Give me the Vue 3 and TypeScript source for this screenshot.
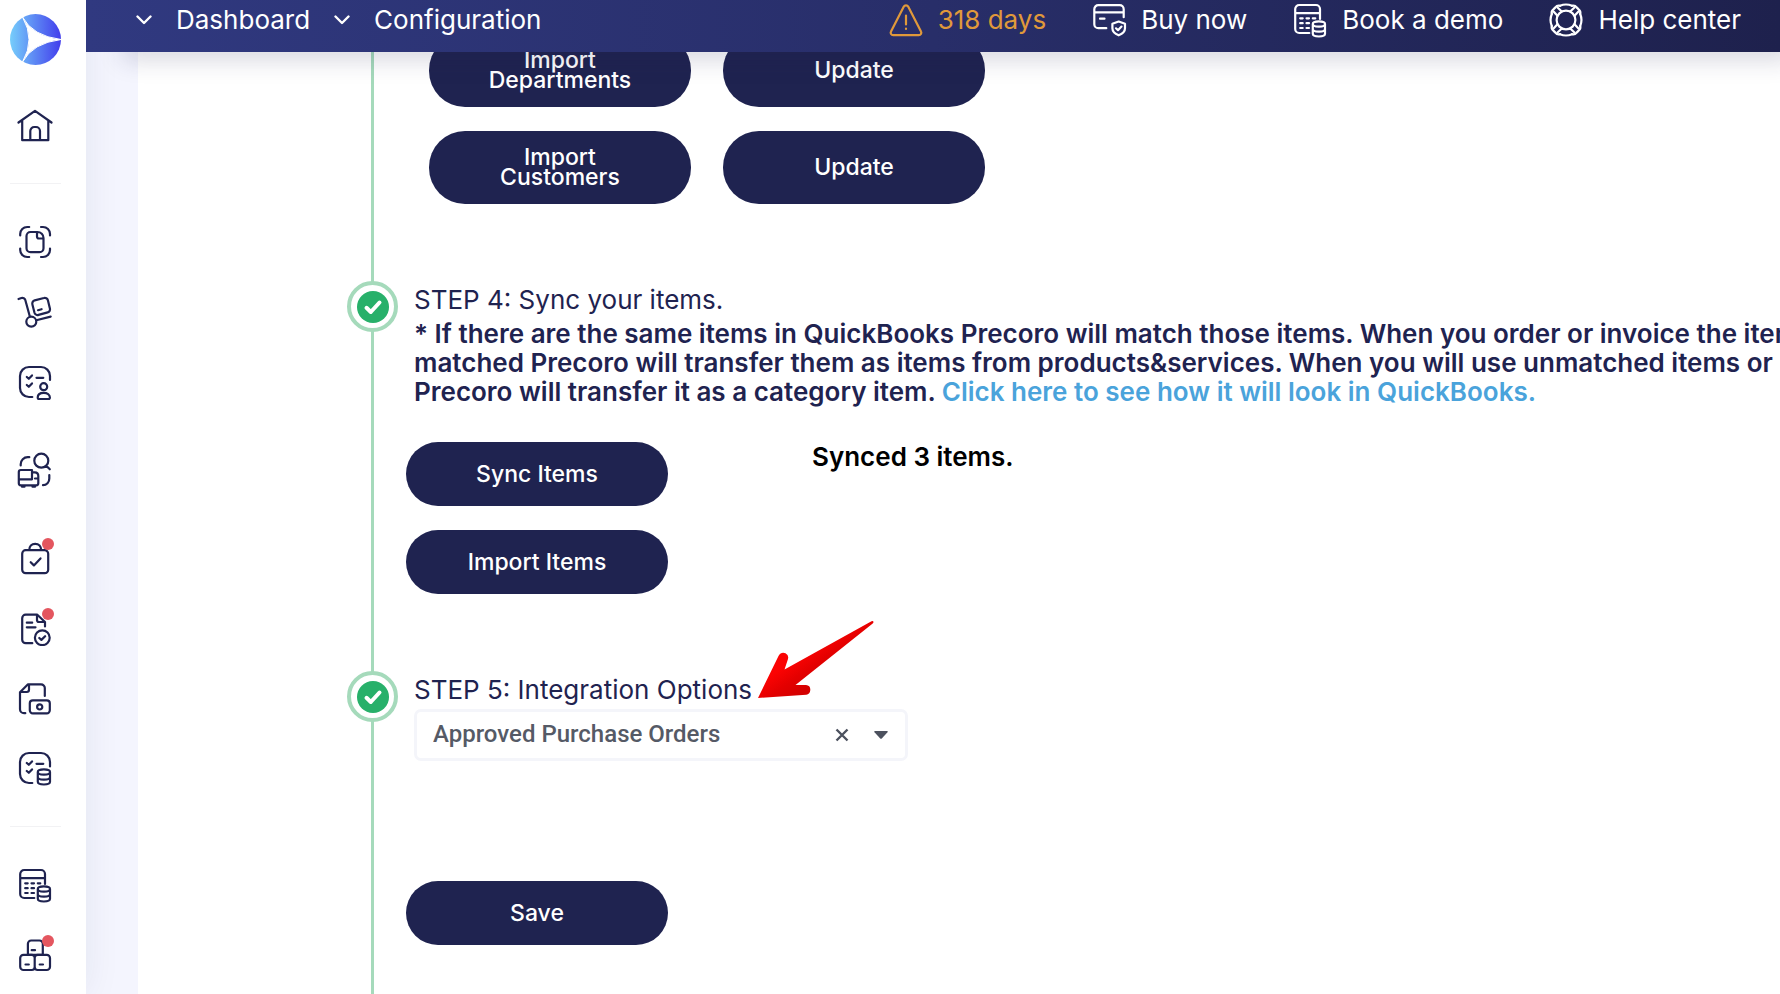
<script setup lang="ts">
import { ref } from 'vue'

interface Icon {
  paths: string[]
}
interface NavItem {
  label: string
  icon: string
  dot?: boolean
}

const coins =
  'M20.8 22c0-1.6 2.7-2.6 6.1-2.6s6.1 1 6.1 2.6-2.7 2.6-6.1 2.6-6.1-1-6.1-2.6zM20.8 22v9.8c0 1.6 2.7 2.7 6.1 2.7s6.1-1.1 6.1-2.7V22M20.8 27c0 1.6 2.7 2.6 6.1 2.6s6.1-1 6.1-2.6'
const checks = 'M9.8 13l2 1.8 3.2-3.4M9.8 21l2 1.8 3.2-3.4M19.5 13.8h6.8'

const icons: Record<string, Icon> = {
  home: {
    paths: ['M1.5 15.5 18 3.8l16.5 11.7M5.2 13.5V33.2H31.3V13.5M13.3 33V24a4 4 0 0 1 4-4h1.7a4 4 0 0 1 4 4v9'],
  },
  scan: {
    paths: [
      'M3.2 11.5V10a7 7 0 0 1 7-7h2M24 3h2a7 7 0 0 1 7 7v1.5M33 24.5V26a7 7 0 0 1-7 7h-2M12.2 33h-2a7 7 0 0 1-7-7v-1.5',
      'M20.5 8h-7a4 4 0 0 0-4 4v12.2a4 4 0 0 0 4 4h9a4 4 0 0 0 4-4V14a6 6 0 0 0-6-6zM20 8v4.5a2 2 0 0 0 2 2h4.5',
    ],
  },
  cart: {
    paths: [
      'M1.5 5l3-1a3 3 0 0 1 3.8 2l4.6 16.8M19.3 26.3l14.4-3.7M9.3 27.7a5 5 0 1 0 10 0 5 5 0 1 0-10 0',
      'M17.7 6.4 26.9 4a3.2 3.2 0 0 1 4 2.2l2 8.2a3.2 3.2 0 0 1-2.2 4l-9.2 2.5a3.2 3.2 0 0 1-4-2.2l-2.1-8.3a3.2 3.2 0 0 1 2.3-4zM21 16.2l3.6-1',
    ],
  },
  people: {
    paths: [
      'M33 16v-4a9 9 0 0 0-9-9H12a9 9 0 0 0-9 9v12a9 9 0 0 0 9 9h3.3',
      checks,
      'M23.2 22.7a3.5 3.5 0 1 0 7 0 3.5 3.5 0 1 0-7 0M20.7 33.5c0-3 2.5-4.7 6-4.7s6.2 1.7 6.2 4.7c0 1-.7 1.7-1.7 1.7h-8.8c-1 0-1.7-.7-1.7-1.7z',
    ],
  },
  van: {
    paths: [
      'M3.7 13.5v-1.3a7 7 0 0 1 7-7h1.6M32.3 23v3.5a6.5 6.5 0 0 1-6.3 6.7M17.3 8.7a7 7 0 1 0 14 0 7 7 0 1 0-14 0M29.5 14l3.3 3.3',
      'M15 27.3H1.8M15 20.3v7M15 18H3.8a2 2 0 0 0-2 2v11.3a2 2 0 0 0 2 2h15.5a2 2 0 0 0 2-2V24c0-2.2-1.5-3.7-3.5-3.7H15V18zM18 26.5h3.3M5 34.7h2.5M15.5 34.7H18',
    ],
  },
  bag: {
    paths: [
      'M8.7 10.2h19a3.5 3.5 0 0 1 3.5 3.5v16a3.5 3.5 0 0 1-3.5 3.5h-19a3.5 3.5 0 0 1-3.5-3.5v-16a3.5 3.5 0 0 1 3.5-3.5zM12.3 10c0-3.7 2.3-6.2 5.9-6.2s5.9 2.5 5.9 6.2',
      'M13.7 22.2l3.2 3.2 6.6-7',
    ],
  },
  approved: {
    paths: [
      'M15.3 33.2H8.7a3.5 3.5 0 0 1-3.5-3.5V8.2a3.5 3.5 0 0 1 3.5-3.5h11.6l7.7 7.3v4.5M20 5v5a2 2 0 0 0 2 2h6M9.8 12.7h5.4M9.8 17.3h8.7',
      'M17.9 27.7a7.4 7.4 0 1 0 14.8 0 7.4 7.4 0 1 0-14.8 0M22.3 28l2.1 1.9 3.7-3.7',
    ],
  },
  payment: {
    paths: [
      'M8.3 33.2H7a4 4 0 0 1-4-4V12.3l8-8h13a3.8 3.8 0 0 1 3.8 3.8V16M12 4.5v5.3a2.2 2.2 0 0 1-2.2 2.2H3.3',
      'M15.8 20.3h14a3 3 0 0 1 3 3v7a3 3 0 0 1-3 3h-14a3 3 0 0 1-3-3v-7a3 3 0 0 1 3-3zM20.1 26.9a2.6 2.6 0 1 0 5.2 0 2.6 2.6 0 1 0-5.2 0',
    ],
  },
  budget: {
    paths: ['M33 16.5V12a9 9 0 0 0-9-9H12a9 9 0 0 0-9 9v12a9 9 0 0 0 9 9h3.3', checks, coins],
  },
  calc: {
    paths: [
      'M17.3 31H7.2a4 4 0 0 1-4-4V7a4 4 0 0 1 4-4H24a4 4 0 0 1 4 4v10M3.3 11.2H28',
      'M8.2 16.3h2.5M14.5 16.3H17M20.8 16.3h2.5M8.2 21.2h2.5M14.5 21.2H17M8.2 26h2.5M14.5 26H17',
      coins,
    ],
  },
  boxes: {
    paths: [
      'M14.2 3.5h8.3a3.3 3.3 0 0 1 3.3 3.3v11H10.9v-11a3.3 3.3 0 0 1 3.3-3.3z',
      'M6.5 17.8h8.2a3 3 0 0 1 3 3V30a3 3 0 0 1-3 3H6.5a3.3 3.3 0 0 1-3.3-3.3v-8.6a3.3 3.3 0 0 1 3.3-3.3zM20.7 17.8h9a3.3 3.3 0 0 1 3.3 3.3v8.6a3.3 3.3 0 0 1-3.3 3.3h-9a3 3 0 0 1-3-3v-9.2a3 3 0 0 1 3-3z',
      'M14.7 13.2h3.3M8.5 27.5h3.3M22.7 27.5H26',
    ],
  },
  warning: {
    paths: ['M15.7 4.7 3 29.5a2.5 2.5 0 0 0 2.2 3.7h25.6a2.5 2.5 0 0 0 2.2-3.7L20.3 4.7a2.6 2.6 0 0 0-4.6 0zM18 13.5v9M18 26.7v.3'],
  },
  card: {
    paths: [
      'M15.3 26.2H7.3a4 4 0 0 1-4-4V7.2a4 4 0 0 1 4-4h21.4a4 4 0 0 1 4 4v8M3.3 10.3h29.3M9 16.7h4.5',
      'M27.7 19.5l6.3 2.3v4.5c0 3.5-2.7 5.6-6.3 7-3.6-1.4-6.3-3.5-6.3-7v-4.5zM25 26.3l2 1.9 3.5-3.6',
    ],
  },
  help: {
    paths: [
      'M8.6 18a9.4 9.4 0 1 0 18.8 0 9.4 9.4 0 1 0-18.8 0',
      'M12 3.8a15.3 15.3 0 0 1 12 0M32.2 12a15.3 15.3 0 0 1 0 12M24 32.2a15.3 15.3 0 0 1-12 0M3.8 24a15.3 15.3 0 0 1 0-12',
      'M12 3.8c-2.2-.6-3.6.2-4.6 1.6L5.4 7.4C4 8.4 3.2 9.8 3.8 12M24 3.8c2.2-.6 3.6.2 4.6 1.6l2 2c1.4 1 2.2 2.4 1.6 4.6M24 32.2c2.2.6 3.6-.2 4.6-1.6l2-2c1.4-1 2.2-2.4 1.6-4.6M12 32.2c-2.2.6-3.6-.2-4.6-1.6l-2-2C4 27.6 3.2 26.2 3.8 24',
      'M9.5 5.5l4.3 4M5.5 9.5l4 4.3M26.5 5.5l-4.3 4M30.5 9.5l-4 4.3M26.5 30.5l-4.3-4M30.5 26.5l-4-4.3M9.5 30.5l4.3-4M5.5 26.5l4-4.3',
    ],
  },
}

const topGroups: NavItem[][] = [
  [
    { label: 'Warehouse requests', icon: 'scan' },
    { label: 'Receipts', icon: 'cart' },
    { label: 'Requests for proposals', icon: 'people' },
  ],
  [{ label: 'Suppliers', icon: 'van' }],
  [
    { label: 'Purchase orders', icon: 'bag', dot: true },
    { label: 'Invoices', icon: 'approved', dot: true },
    { label: 'Payments', icon: 'payment' },
    { label: 'Expenses', icon: 'budget' },
  ],
]
const bottomGroup: NavItem[] = [
  { label: 'Budgets', icon: 'calc' },
  { label: 'Inventory', icon: 'boxes', dot: true },
]

const crumbs = ['Dashboard', 'Configuration']
const actions = [
  { label: '318 days', icon: 'warning', warn: true },
  { label: 'Buy now', icon: 'card' },
  { label: 'Book a demo', icon: 'calc' },
  { label: 'Help center', icon: 'help' },
]
const imports = ['Import Departments', 'Import Customers']
const option = ref('Approved Purchase Orders')
</script>

<template>
  <div class="app">
    <aside class="sidebar">
      <a class="logo" href="#" aria-label="Precoro">
        <svg viewBox="0 0 51 51">
          <defs>
            <linearGradient id="brand" x1="0" x2="1" y1="0" y2="0">
              <stop offset="0" stop-color="#76cefb" />
              <stop offset="1" stop-color="#423dec" />
            </linearGradient>
          </defs>
          <circle cx="25.5" cy="25.5" r="25.5" fill="url(#brand)" />
          <path
            d="M12.5 3Q22.5 22 51 25.5 22.5 29 12.5 48 25.5 25.5 12.5 3z"
            fill="#fff"
            stroke="#fff"
            stroke-width="1"
          />
        </svg>
      </a>
      <nav class="nav">
        <a class="nav-link" href="#" aria-label="Home">
          <svg class="icon" viewBox="0 0 36 36"><path v-for="d in icons.home.paths" :key="d" :d="d" /></svg>
        </a>
        <hr class="divider" />
        <div class="groups">
          <div v-for="(group, i) in topGroups" :key="i" class="group">
            <a v-for="item in group" :key="item.label" class="nav-link" href="#" :aria-label="item.label">
              <svg class="icon" viewBox="0 0 36 36"><path v-for="d in icons[item.icon].paths" :key="d" :d="d" /></svg>
              <span v-if="item.dot" class="dot"></span>
            </a>
          </div>
        </div>
        <hr class="divider" />
        <div class="group">
          <a v-for="item in bottomGroup" :key="item.label" class="nav-link" href="#" :aria-label="item.label">
            <svg class="icon" viewBox="0 0 36 36"><path v-for="d in icons[item.icon].paths" :key="d" :d="d" /></svg>
            <span v-if="item.dot" class="dot"></span>
          </a>
        </div>
      </nav>
    </aside>

    <div class="main">
      <header class="topbar">
        <nav class="crumbs">
          <template v-for="crumb in crumbs" :key="crumb">
            <svg class="chevron" viewBox="0 0 16 10"><path d="M1.5 1.5 8 8l6.5-6.5" /></svg>
            <a href="#">{{ crumb }}</a>
          </template>
        </nav>
        <nav class="actions">
          <a v-for="a in actions" :key="a.label" href="#" class="action" :class="{ warn: a.warn }">
            <svg class="icon" viewBox="0 0 36 36"><path v-for="d in icons[a.icon].paths" :key="d" :d="d" /></svg>
            <span>{{ a.label }}</span>
          </a>
        </nav>
      </header>

      <main class="page">
        <ol class="steps">
          <li class="step">
            <div class="body">
              <div class="imports">
                <template v-for="name in imports" :key="name">
                  <button type="button" class="btn tall">{{ name }}</button>
                  <button type="button" class="btn tall">Update</button>
                </template>
              </div>
            </div>
          </li>

          <li class="step">
            <span class="marker">
              <svg viewBox="0 0 32 32"><path d="M9.5 16.8l4.3 4.2 8.7-9.5" /></svg>
            </span>
            <div class="body">
              <h2 class="title">STEP 4: Sync your items.</h2>
              <p class="note">
                <span>* If there are the same items in QuickBooks Precoro will match those items. When you order or invoice the items</span>
                <span>matched Precoro will transfer them as items from products&amp;services. When you will use unmatched items or expenses</span>
                <span>Precoro will transfer it as a category item. <a href="#">Click here to see how it will look in QuickBooks.</a></span>
              </p>
              <div class="sync">
                <div class="stack">
                  <button type="button" class="btn">Sync Items</button>
                  <button type="button" class="btn">Import Items</button>
                </div>
                <p class="status">Synced 3 items.</p>
              </div>
            </div>
          </li>

          <li class="step last">
            <span class="marker">
              <svg viewBox="0 0 32 32"><path d="M9.5 16.8l4.3 4.2 8.7-9.5" /></svg>
            </span>
            <div class="body">
              <label class="title" for="integration">STEP 5: Integration Options</label>
              <div class="field">
                <select id="integration" v-model="option">
                  <option>Approved Purchase Orders</option>
                </select>
                <button type="button" class="clear" aria-label="Clear">
                  <svg viewBox="0 0 14 14"><path d="M1.5 1.5l11 11M12.5 1.5l-11 11" /></svg>
                </button>
                <svg class="caret" viewBox="0 0 14 8"><path d="M1 0h12q1.5 0 .5 1.2L8 7.3q-1 1-2 0L.5 1.2Q-.5 0 1 0z" /></svg>
                <svg class="arrow" viewBox="0 0 118 80">
                  <defs>
                    <linearGradient id="red" gradientUnits="userSpaceOnUse" x1="48" y1="32" x2="66" y2="58">
                      <stop offset="0" stop-color="#fb0303" />
                      <stop offset=".5" stop-color="#e40000" />
                      <stop offset="1" stop-color="#d40000" />
                    </linearGradient>
                  </defs>
                  <path
                    d="M1 78 21.5 36Q24 31.5 28.5 33.2 32 34.8 31 39L27.5 49.5 114.5 1.2q1.8-.6 2 .8 0 .8-.8 1.5L38.5 65H49q4.5.3 4.3 5-.3 4.3-4 4.8z"
                    fill="url(#red)"
                  />
                </svg>
              </div>
              <button type="button" class="btn save">Save</button>
            </div>
          </li>
        </ol>
      </main>
    </div>
  </div>
</template>

<style>
body {
  margin: 0;
  background: #fff;
}
</style>

<style scoped>
.app {
  display: flex;
  height: 100vh;
  overflow: hidden;
  font-family: Inter, "Liberation Sans", sans-serif;
  color: #1f2350;
}
a {
  color: inherit;
  text-decoration: none;
}
.icon {
  display: block;
  flex: none;
  width: 36px;
  height: 36px;
  fill: none;
  stroke: currentColor;
  stroke-width: 2.2;
  stroke-linecap: round;
  stroke-linejoin: round;
}

/* Sidebar */
.sidebar {
  position: relative;
  z-index: 1;
  flex: none;
  width: 86px;
  background: #fff;
  box-shadow: 0 0 36px rgba(31, 35, 80, 0.08);
}
.logo {
  display: block;
  width: 51px;
  height: 51px;
  margin: 14px 0 42px 10px;
}
.logo svg {
  display: block;
}
.nav,
.groups,
.group {
  display: flex;
  flex-direction: column;
}
.group {
  gap: 34px;
}
.groups {
  gap: 52px;
}
.nav-link {
  position: relative;
  width: 36px;
  margin-left: 17px;
}
.dot {
  position: absolute;
  top: -2px;
  right: -1px;
  width: 12px;
  height: 12px;
  border-radius: 50%;
  background: #e4565f;
}
.divider {
  width: 51px;
  height: 1px;
  margin: 40px 0 40px 10px;
  border: 0;
  background: #f2f2f4;
}

/* Top bar */
.main {
  position: relative;
  flex: 1;
  min-width: 0;
  background: #f4f5fe;
}
.topbar {
  position: absolute;
  z-index: 2;
  top: 0;
  left: 0;
  right: 0;
  box-sizing: border-box;
  height: 52px;
  padding: 0 39px 12px 50px;
  display: flex;
  align-items: center;
  justify-content: space-between;
  background: linear-gradient(90deg, #303980, #282e69 50%, #1e214d);
  box-shadow: 24px 20px 24px -12px rgba(31, 35, 80, 0.18);
  color: #fff;
  font-size: 26px;
  line-height: 30px;
}
.crumbs {
  display: flex;
  align-items: center;
  gap: 24px;
}
.chevron {
  width: 16px;
  height: 10px;
  fill: none;
  stroke: #fff;
  stroke-width: 2.4;
  stroke-linecap: round;
  stroke-linejoin: round;
}
.actions {
  display: flex;
  gap: 45px;
}
.action {
  display: flex;
  align-items: center;
  gap: 14px;
}
.warn {
  color: #e0993a;
}

/* Steps */
.page {
  box-sizing: border-box;
  height: 100%;
  margin-left: 52px;
  padding: 34px 0 0 209px;
  overflow: hidden;
  background: #fff;
}
.steps {
  display: flex;
  flex-direction: column;
  height: 100%;
  margin: 0;
  padding: 0;
  list-style: none;
}
.step {
  position: relative;
  display: grid;
  grid-template-columns: 51px 1fr;
  column-gap: 16px;
  align-items: start;
  padding-bottom: 77px;
}
.step.last {
  flex: 1;
}
.step::before {
  content: "";
  position: absolute;
  top: 0;
  bottom: 0;
  left: 24px;
  width: 3px;
  background: #a5dabb;
}
.marker {
  position: relative;
  box-sizing: border-box;
  display: grid;
  place-items: center;
  width: 51px;
  height: 51px;
  border: 4px solid #a5dabb;
  border-radius: 50%;
  background: #fff;
}
.marker svg {
  width: 32px;
  height: 32px;
  border-radius: 50%;
  background: #27b06a;
  fill: none;
  stroke: #fff;
  stroke-width: 4;
  stroke-linecap: round;
  stroke-linejoin: round;
}
.body {
  grid-column: 2;
  min-width: 0;
}
.title {
  display: block;
  margin: 0;
  padding: 4px 0;
  font-size: 26px;
  font-weight: 400;
  line-height: 30px;
}
.note {
  margin: 0;
  font-size: 26px;
  font-weight: 600;
  line-height: 29px;
  white-space: nowrap;
}
.note span {
  display: block;
}
.note a {
  color: #4aa3db;
}
.btn {
  box-sizing: border-box;
  width: 262px;
  min-height: 64px;
  padding: 0 56px;
  border: 0;
  border-radius: 36px;
  background: #1f2350;
  color: #fff;
  font: 500 23px/20px Inter, "Liberation Sans", sans-serif;
}
.tall {
  min-height: 73px;
  padding-bottom: 2px;
}
.imports {
  display: grid;
  grid-template-columns: max-content max-content;
  gap: 24px 32px;
  margin-left: 15px;
}
.sync {
  display: flex;
  gap: 144px;
  margin: 36px 0 0 -8px;
}
.stack {
  display: flex;
  flex-direction: column;
  gap: 24px;
}
.status {
  margin: 0;
  color: #000;
  font-size: 26px;
  font-weight: 600;
  line-height: 29px;
}
.field {
  position: relative;
  display: flex;
  align-items: center;
  width: 494px;
}
.field select {
  appearance: none;
  box-sizing: border-box;
  width: 100%;
  height: 52px;
  padding: 0 96px 2px 16px;
  border: 3px solid #f4f5fa;
  border-radius: 7px;
  background: #fff;
  color: #555a66;
  font: 500 24px/28px Roboto, "Liberation Sans", sans-serif;
}
.clear {
  position: absolute;
  right: 59px;
  width: 14px;
  height: 14px;
  padding: 0;
  border: 0;
  background: none;
}
.clear svg {
  display: block;
  stroke: #4c515e;
  stroke-width: 2.4;
}
.caret {
  position: absolute;
  right: 20px;
  width: 14px;
  height: 8px;
  fill: #4c515e;
  pointer-events: none;
}
.arrow {
  position: absolute;
  left: 343px;
  bottom: 61px;
  width: 118px;
  height: 80px;
  pointer-events: none;
}
.save {
  margin: 120px 0 0 -8px;
}
</style>
